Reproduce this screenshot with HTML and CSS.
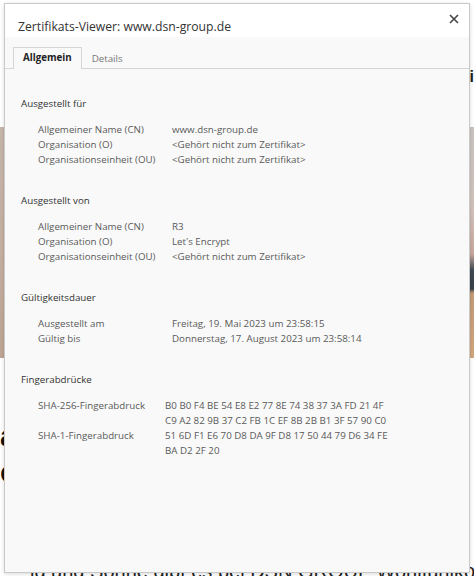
FILE: index.html
```html
<!DOCTYPE html>
<html lang="de">
<head>
    <meta charset="UTF-8">
    <meta name="viewport" content="width=device-width, initial-scale=1.0">
    <title>Zertifikats-Viewer</title>
    <link rel="stylesheet" href="styles.css">
</head>
<body>

<!-- Webseite im Hintergrund -->
<div class="page">
    <div class="page-top">
        <span class="page-dot">i</span>
    </div>
    <div class="page-hero">
        <div class="hero-left"></div>
        <div class="hero-right"></div>
    </div>
    <div class="page-headline">
        <p class="headline-line">an</p>
        <p class="headline-line">ce</p>
    </div>
    <p class="page-teaser">lg und Sonne gibt es bei DSN GROUP Wohlfühlkomfort</p>
</div>

<!-- Zertifikatsdialog -->
<div class="dialog">
    <div class="dialog-header">
        <h1 class="dialog-title">Zertifikats-Viewer: www.dsn-group.de</h1>
        <button class="close-btn" aria-label="Schließen">
            <svg width="10" height="10" viewBox="0 0 10 10">
                <path d="M1 1 L9 9 M9 1 L1 9" stroke="#444" stroke-width="1.6" fill="none"/>
            </svg>
        </button>
    </div>
    <div class="tabs">
        <span class="tab active">Allgemein</span>
        <span class="tab">Details</span>
    </div>

    <div class="dialog-body">
        <section class="cert-section">
            <h2>Ausgestellt für</h2>
            <table class="cert-table">
                <tr><td>Allgemeiner Name (CN)</td><td>www.dsn-group.de</td></tr>
                <tr><td>Organisation (O)</td><td>&lt;Gehört nicht zum Zertifikat&gt;</td></tr>
                <tr><td>Organisationseinheit (OU)</td><td>&lt;Gehört nicht zum Zertifikat&gt;</td></tr>
            </table>
        </section>

        <section class="cert-section">
            <h2>Ausgestellt von</h2>
            <table class="cert-table">
                <tr><td>Allgemeiner Name (CN)</td><td>R3</td></tr>
                <tr><td>Organisation (O)</td><td>Let's Encrypt</td></tr>
                <tr><td>Organisationseinheit (OU)</td><td>&lt;Gehört nicht zum Zertifikat&gt;</td></tr>
            </table>
        </section>

        <section class="cert-section">
            <h2>Gültigkeitsdauer</h2>
            <table class="cert-table">
                <tr><td>Ausgestellt am</td><td>Freitag, 19. Mai 2023 um 23:58:15</td></tr>
                <tr><td>Gültig bis</td><td>Donnerstag, 17. August 2023 um 23:58:14</td></tr>
            </table>
        </section>

        <section class="cert-section">
            <h2>Fingerabdrücke</h2>
            <table class="cert-table fingerprints">
                <tr><td>SHA-256-Fingerabdruck</td><td>B0 B0 F4 BE 54 E8 E2 77 8E 74 38 37 3A FD 21 4F<br>C9 A2 82 9B 37 C2 FB 1C EF 8B 2B B1 3F 57 90 C0</td></tr>
                <tr><td>SHA-1-Fingerabdruck</td><td>51 6D F1 E6 70 D8 DA 9F D8 17 50 44 79 D6 34 FE<br>BA D2 2F 20</td></tr>
            </table>
        </section>
    </div>
</div>

</body>
</html>
```

FILE: styles.css
```css
body {
    margin: 0;
    background-color: #ffffff;
    font-family: "Open Sans", "Noto Sans", Arial, sans-serif;
    overflow: hidden;
    height: 576px;
}
.page {
    display: flex;
    flex-direction: column;
}
.page-top {
    height: 127px;
    position: relative;
}
.page-dot {
    position: absolute;
    right: 0;
    top: 68px;
    font: bold 16px "Liberation Sans", Arial, sans-serif;
    color: #222;
}
.page-hero {
    height: 231px;
    display: flex;
    justify-content: space-between;
}
.hero-left {
    width: 10px;
    background: linear-gradient(to bottom, #c6b6ab, #c4ae9f 60%, #bda493);
}
.hero-right {
    width: 10px;
    background: linear-gradient(to bottom, #c9c4c1 0%, #d3c2bb 35%, #c8a89d 55%, #404a55 62%, #38414a 70%, #c49c78 72%, #d2a67c 100%);
}
.page-headline {
    margin-top: 60px;
}
.headline-line {
    margin: 0;
    font: bold 30px "Liberation Sans", Arial, sans-serif;
    line-height: 36px;
    color: #111;
}
.page-teaser {
    margin: 70px 0 0 30px;
    font: 20px "Liberation Sans", Arial, sans-serif;
    color: #222;
    white-space: nowrap;
}

.dialog {
    position: absolute;
    left: 4px;
    top: 3px;
    width: 466px;
    height: 570px;
    box-sizing: border-box;
    border: 1px solid #c9c9c9;
    background-color: #f9f9f9;
    box-shadow: 0 1px 4px rgba(0, 0, 0, 0.15);
}
.dialog-header {
    height: 33px;
    background-color: #ffffff;
    position: relative;
}
.dialog-title {
    margin: 0;
    padding: 14px 0 0 13px;
    font-size: 12.2px;
    font-weight: normal;
    line-height: 18px;
    color: #333;
}
.close-btn {
    position: absolute;
    right: 10px;
    top: 8px;
    border: none;
    background: transparent;
    padding: 0;
    width: 10px;
    height: 10px;
    cursor: pointer;
}
.tabs {
    height: 32px;
    box-sizing: border-box;
    border-bottom: 1px solid #d6d6d6;
    padding-left: 8px;
    display: flex;
    align-items: flex-end;
}
.tab {
    font-size: 9.75px;
    color: #777;
    line-height: 20px;
    padding: 0 9px;
    margin-bottom: -1px;
    border: 1px solid transparent;
    border-bottom: none;
}
.tab.active {
    font-weight: bold;
    color: #222;
    border-color: #d6d6d6;
    background-color: #f9f9f9;
    height: 21px;
}
.dialog-body {
    padding: 27px 0 0 16px;
}
.cert-section {
    margin-bottom: 26px;
}
.cert-section h2 {
    margin: 0 0 11px 0;
    font-size: 9.75px;
    font-weight: normal;
    line-height: 15px;
    color: #333;
}
.cert-table {
    border-collapse: collapse;
    margin-left: 17px;
}
.cert-table td {
    padding: 0;
    font-size: 9.75px;
    line-height: 15px;
    color: #5a5a5a;
    vertical-align: top;
    white-space: nowrap;
}
.cert-table td:first-child {
    width: 134px;
}
.fingerprints td:first-child {
    width: auto;
    padding-right: 20px;
}
```
